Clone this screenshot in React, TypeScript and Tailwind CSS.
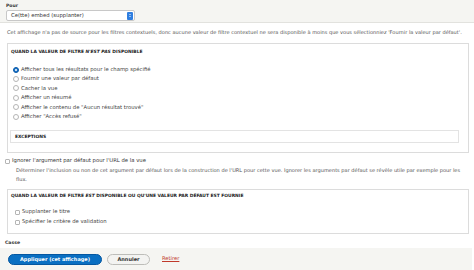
import React from "react";

const Radio = ({ checked, label }: { checked?: boolean; label: string }) => (
  <div className="flex items-center h-[9.4px] gap-[2px]">
    {checked ? (
      <span className="w-[6px] h-[6px] rounded-full bg-[#1a73c8] border border-[#0b5aa8] flex items-center justify-center">
        <span className="w-[2px] h-[2px] rounded-full bg-white" />
      </span>
    ) : (
      <span className="w-[6px] h-[6px] rounded-full bg-white border border-[#b5b5b5]" />
    )}
    <span>{label}</span>
  </div>
);

const Check = ({ label }: { label: string }) => (
  <div className="flex items-center h-[10px] gap-[2px]">
    <span className="w-[5px] h-[5px] rounded-[1px] bg-white border border-[#b5b5b5]" />
    <span>{label}</span>
  </div>
);

export default function App() {
  return (
    <div
      className="w-[474px] h-[270px] bg-white overflow-hidden text-[#333] text-[5.3px] leading-none flex flex-col whitespace-nowrap"
      style={{ fontFamily: '"DejaVu Sans", Verdana, sans-serif' }}
    >
      <div className="h-[23px] bg-[#f5f5f2] border-b border-[#e2e2de] pl-[6px] pt-[3px] flex flex-col shrink-0">
        <div className="font-bold text-[4.6px] h-[6px] flex items-center">Pour</div>
        <div className="mt-[1px] w-[129px] h-[11px] bg-white border border-[#c8c8c8] rounded-[2px] flex items-center justify-between pl-[4px] pr-[1px]">
          <span>Ce(tte) embed (supplanter)</span>
          <span className="w-[6px] h-[8px] rounded-[1px] bg-[#2f7ee0] flex flex-col items-center justify-center gap-[1px]">
            <span className="w-0 h-0 border-l-[1.5px] border-r-[1.5px] border-b-[1.5px] border-l-transparent border-r-transparent border-b-white" />
            <span className="w-0 h-0 border-l-[1.5px] border-r-[1.5px] border-t-[1.5px] border-l-transparent border-r-transparent border-t-white" />
          </span>
        </div>
      </div>

      <div className="pl-[7px] h-[20px] flex items-center text-[#555] text-[5.05px] shrink-0">
        Cet affichage n'a pas de source pour les filtres contextuels, donc aucune valeur de filtre contextuel ne sera disponible à moins que vous sélectionniez 'Fournir la valeur par défaut'.
      </div>

      <div className="ml-[7px] w-[462px] h-[110px] border border-[#dcdcdc] flex flex-col shrink-0">
        <div className="h-[16px] pl-[3px] flex items-center font-bold text-[4.45px] text-[#222]">
          QUAND LA VALEUR DE FILTRE&nbsp;<i>N'EST PAS</i>&nbsp;DISPONIBLE
        </div>
        <div className="pl-[5px] mt-[5px] flex flex-col text-[#444]">
          <Radio checked label="Afficher tous les résultats pour le champ spécifié" />
          <Radio label="Fournir une valeur par défaut" />
          <Radio label="Cacher la vue" />
          <Radio label="Afficher un résumé" />
          <Radio label="Afficher le contenu de &quot;Aucun résultat trouvé&quot;" />
          <Radio label="Afficher &quot;Accès refusé&quot;" />
        </div>
        <div className="ml-[2px] mt-[9px] w-[449px] h-[13px] border border-[#e3e3e3] flex items-center pl-[4px] font-bold text-[4.45px] text-[#222]">
          EXCEPTIONS
        </div>
      </div>

      <div className="mt-[3px] pl-[5px] flex flex-col shrink-0">
        <Check label="Ignorer l'argument par défaut pour l'URL de la vue" />
        <div className="pl-[11px] text-[#555] text-[5.05px] flex flex-col">
          <div className="h-[9px] flex items-center">
            Déterminer l'inclusion ou non de cet argument par défaut lors de la construction de l'URL pour cette vue. Ignorer les arguments par défaut se révèle utile par exemple pour les
          </div>
          <div className="h-[9px] flex items-center">flux.</div>
        </div>
      </div>

      <div className="mt-[5px] ml-[7px] w-[462px] h-[45px] border border-[#dcdcdc] flex flex-col shrink-0">
        <div className="h-[13px] pl-[3px] flex items-center font-bold text-[4.45px] text-[#222]">
          QUAND LA VALEUR DE FILTRE&nbsp;<i>EST</i>&nbsp;DISPONIBLE OU QU'UNE VALEUR PAR DÉFAUT EST FOURNIE
        </div>
        <div className="pl-[7px] mt-[4px] flex flex-col text-[#444]">
          <Check label="Supplanter le titre" />
          <Check label="Spécifier le critère de validation" />
        </div>
      </div>

      <div className="pl-[5px] h-[14px] pt-[5px] flex items-center font-bold text-[4.6px] text-[#333] shrink-0">Casse</div>

      <div className="w-[472px] flex-1 bg-[#f5f5f2] flex items-center pl-[8px] gap-[5px]">
        <div className="w-[94px] h-[11px] rounded-full bg-[#0a6fc2] border border-[#0557a0] text-white font-bold text-[5px] flex items-center justify-center">
          Appliquer (cet affichage)
        </div>
        <div className="w-[43px] h-[11px] rounded-full bg-[#f3f3f1] border border-[#bdbdb9] text-[#333] font-bold text-[5px] flex items-center justify-center">
          Annuler
        </div>
        <span className="ml-[7px] text-[#c0392b] underline text-[5.2px]">Retirer</span>
      </div>
    </div>
  );
}
